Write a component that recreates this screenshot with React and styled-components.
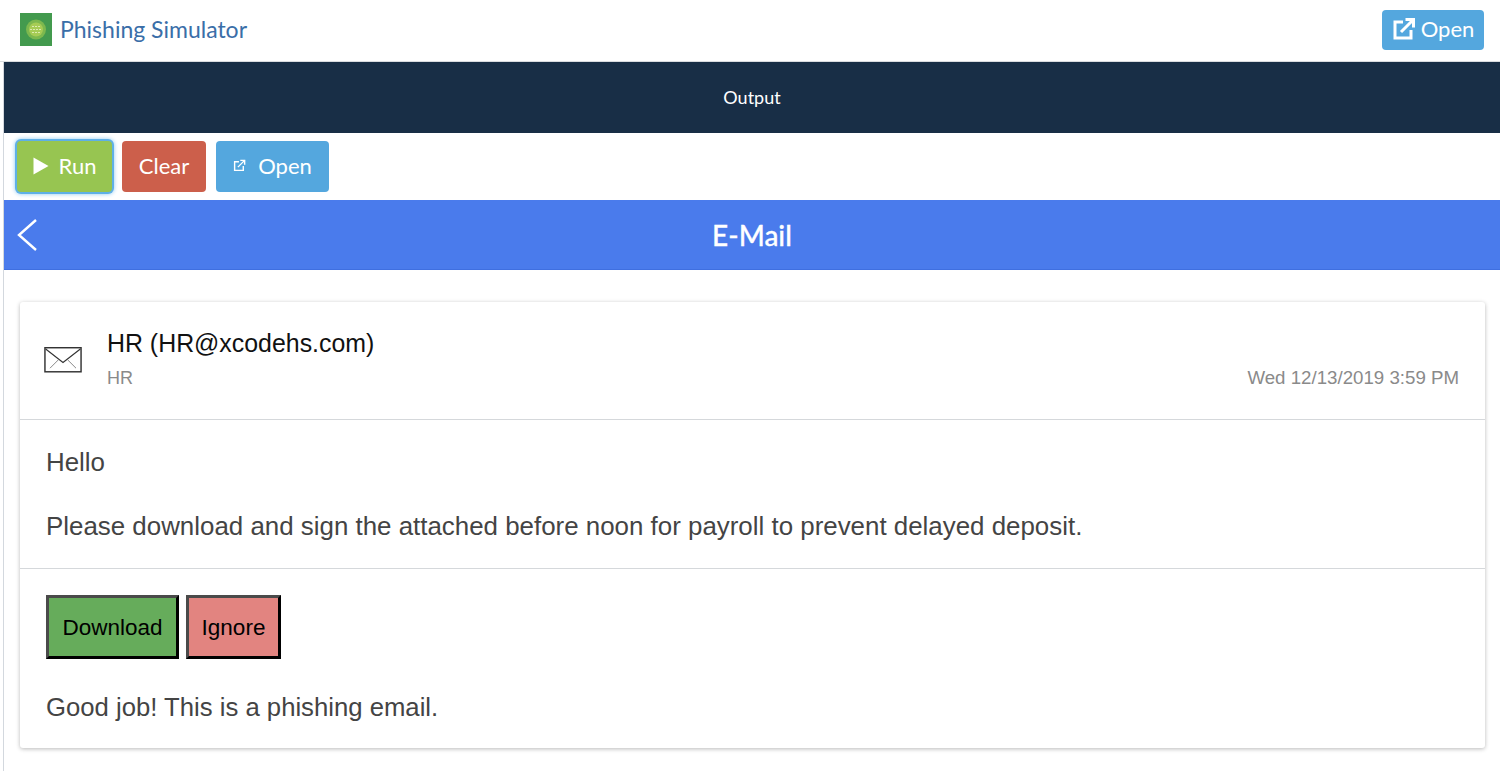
import React from "react";
import styled, { createGlobalStyle } from "styled-components";

const GlobalStyle = createGlobalStyle`
  html, body {
    margin: 0;
    padding: 0;
    background: #fff;
    overflow: hidden;
  }
`;

const Page = styled.div`
  width: 1500px;
  height: 771px;
  overflow: hidden;
  display: flex;
  flex-direction: column;
  font-family: "Liberation Sans", Arial, sans-serif;
`;

const TitleBar = styled.header`
  height: 62px;
  flex: none;
  box-sizing: border-box;
  display: flex;
  align-items: center;
  justify-content: space-between;
  padding: 0 16px 2px 20px;
  border-bottom: 1px solid #d9dcdf;
`;

const TitleGroup = styled.div`
  display: flex;
  align-items: center;
  gap: 8px;
`;

const Title = styled.a`
  font-family: "Lato", sans-serif;
  font-size: 23px;
  line-height: 30px;
  padding-bottom: 1px;
  color: #3a6ea8;
`;

const Button = styled.button`
  display: inline-flex;
  align-items: center;
  justify-content: center;
  gap: ${(p) => p.$gap || 8}px;
  box-sizing: border-box;
  height: ${(p) => p.$height || 51}px;
  width: ${(p) => p.$width}px;
  padding: 0 0 2px;
  border: none;
  border-radius: 4px;
  color: #fff;
  background: ${(p) => p.$color};
  font-family: "Lato", sans-serif;
  font-size: 22px;
  box-shadow: ${(p) => (p.$focus ? "0 0 0 2px #5fb0e6, 0 0 4px 2px #8cc8f0" : "none")};
`;

const Workspace = styled.main`
  flex: 1;
  margin-left: 3px;
  border-left: 1px solid #d3d8de;
`;

const OutputBar = styled.div`
  height: 71px;
  box-sizing: border-box;
  padding-bottom: 2px;
  display: flex;
  align-items: center;
  justify-content: center;
  background: #182e46;
  color: #fff;
  font-family: "Lato", sans-serif;
  font-size: 18px;
`;

const Toolbar = styled.div`
  height: 67px;
  box-sizing: border-box;
  display: flex;
  gap: 10px;
  padding: 8px 0 0 13px;
`;

const NavBar = styled.div`
  position: relative;
  height: 70px;
  box-sizing: border-box;
  display: flex;
  align-items: center;
  justify-content: center;
  background: #4a7bec;
  border-bottom: 1px solid #3f6fe0;
  color: #fff;
  font-family: "Lato", sans-serif;
  font-size: 28px;
  font-weight: 500;
  -webkit-text-stroke: 0.3px #fff;
`;

const BackIcon = styled.svg`
  position: absolute;
  left: 12px;
  top: 18px;
`;

const Content = styled.div`
  padding: 32px 15px 0 16px;
`;

const Card = styled.article`
  height: 446px;
  box-sizing: border-box;
  border-radius: 3px;
  background: #fff;
  box-shadow: 0 1px 4px rgba(0, 0, 0, 0.28);
`;

const CardHeader = styled.div`
  height: 118px;
  box-sizing: border-box;
  display: flex;
  padding: 24px 26px 0 24px;
  border-bottom: 1px solid #d5d8db;
`;

const EnvelopeIcon = styled.svg`
  margin-top: 21px;
  flex: none;
`;

const Sender = styled.div`
  margin-left: 25px;
  flex: 1;
`;

const SenderName = styled.div`
  font-size: 24.9px;
  line-height: 34px;
  color: #111;
`;

const SenderSub = styled.div`
  margin-top: 8px;
  font-size: 18px;
  line-height: 20px;
  color: #8a8a8a;
`;

const Timestamp = styled.div`
  align-self: flex-start;
  margin-top: 42px;
  font-size: 18.7px;
  line-height: 20px;
  color: #8a8a8a;
`;

const CardBody = styled.div`
  height: 149px;
  box-sizing: border-box;
  padding: 26px 26px 0;
  border-bottom: 1px solid #d5d8db;
`;

const Paragraph = styled.p`
  margin: 0 0 ${(p) => p.$gap || 0}px;
  font-size: 25.9px;
  line-height: 32px;
  color: #444;
`;

const CardActions = styled.div`
  padding: 26px 26px 0;
`;

const ActionRow = styled.div`
  display: flex;
  gap: 7px;
  margin-bottom: 33px;
`;

const ActionButton = styled.button`
  height: 64px;
  width: ${(p) => p.$width}px;
  box-sizing: border-box;
  padding: 2px 0 0;
  border: 3px solid;
  border-color: #4a4a4a #000 #000 #4a4a4a;
  background: ${(p) => p.$color};
  color: #000;
  font-family: "Liberation Sans", Arial, sans-serif;
  font-size: 22.5px;
`;

const ResultText = styled(Paragraph)`
  margin-top: -1px;
  font-size: 25.7px;
`;

const Logo = () => (
  <svg width="32" height="33" viewBox="0 0 32 33">
    <rect width="32" height="33" fill="#439a4e" />
    <circle cx="16" cy="16.5" r="10" fill="#7cb84e" />
    <circle cx="16" cy="16.5" r="7" fill="#a6cc55" />
    <path d="M10 16.5h12M12 13.5h8M12 19.5h8" stroke="#dcebb0" strokeWidth="1.2" strokeDasharray="2 1" />
  </svg>
);

const ExternalIcon = ({ size, stroke }) => (
  <svg width={size} height={size} viewBox="0 0 24 24" fill="none" stroke="#fff" strokeWidth={stroke}>
    <path d="M11 5H3v16h16v-8" />
    <path d="M9 15 21 3M13.5 2.5H21.5V10.5" />
  </svg>
);

const App = () => (
  <Page>
    <GlobalStyle />
    <TitleBar>
      <TitleGroup>
        <Logo />
        <Title>Phishing Simulator</Title>
      </TitleGroup>
      <Button $color="#54a7de" $width={102} $height={40} $gap={5}>
        <ExternalIcon size={24} stroke={3} />
        Open
      </Button>
    </TitleBar>
    <Workspace>
      <OutputBar>Output</OutputBar>
      <Toolbar>
        <Button $color="#97c551" $width={95} $gap={10} $focus>
          <svg width="16" height="18" viewBox="0 0 16 18">
            <path d="M0.5 0.5 15.5 9 0.5 17.5z" fill="#fff" />
          </svg>
          Run
        </Button>
        <Button $color="#cc5f4b" $width={84}>
          Clear
        </Button>
        <Button $color="#54a7de" $width={113} $gap={12}>
          <ExternalIcon size={13} stroke={2.6} />
          Open
        </Button>
      </Toolbar>
      <NavBar>
        <BackIcon width="22" height="34" viewBox="0 0 22 34" fill="none" stroke="#fff" strokeWidth="2.4">
          <path d="M20 2 3 17l17 15" />
        </BackIcon>
        E-Mail
      </NavBar>
      <Content>
        <Card>
          <CardHeader>
            <EnvelopeIcon width="38" height="26" viewBox="0 0 39 27" fill="none" stroke="#333">
              <rect x="0.75" y="0.75" width="37.5" height="25" strokeWidth="1.5" />
              <path d="M1.5 2 19.5 16 37.5 2" strokeWidth="1.2" />
              <path d="M6 22 15 13M33 22 24 13" strokeWidth="0.8" stroke="#666" />
            </EnvelopeIcon>
            <Sender>
              <SenderName>HR (HR@xcodehs.com)</SenderName>
              <SenderSub>HR</SenderSub>
            </Sender>
            <Timestamp>Wed 12/13/2019 3:59 PM</Timestamp>
          </CardHeader>
          <CardBody>
            <Paragraph $gap={32}>Hello</Paragraph>
            <Paragraph>Please download and sign the attached before noon for payroll to prevent delayed deposit.</Paragraph>
          </CardBody>
          <CardActions>
            <ActionRow>
              <ActionButton $color="#66ac5b" $width={133}>Download</ActionButton>
              <ActionButton $color="#e28480" $width={95}>Ignore</ActionButton>
            </ActionRow>
            <ResultText>Good job! This is a phishing email.</ResultText>
          </CardActions>
        </Card>
      </Content>
    </Workspace>
  </Page>
);

export default App;
